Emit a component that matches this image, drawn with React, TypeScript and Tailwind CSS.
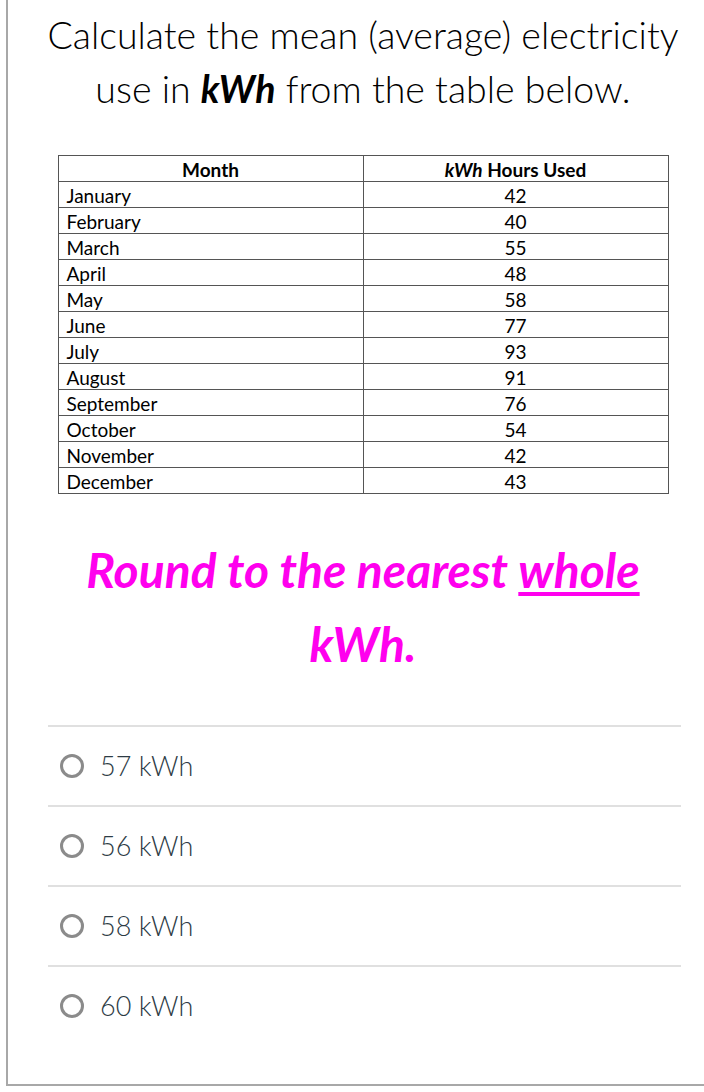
const rows: [string, number][] = [
  ["January", 42],
  ["February", 40],
  ["March", 55],
  ["April", 48],
  ["May", 58],
  ["June", 77],
  ["July", 93],
  ["August", 91],
  ["September", 76],
  ["October", 54],
  ["November", 42],
  ["December", 43],
];

const answers = ["57 kWh", "56 kWh", "58 kWh", "60 kWh"];

function UsageTable() {
  return (
    <table className="mx-auto w-[611px] border-collapse font-['Lato',sans-serif] text-[19px] leading-none text-black">
      <thead>
        <tr className="h-[26px]">
          <th className="w-[305px] border border-[#555] pt-[2px] font-bold">Month</th>
          <th className="border border-[#555] pt-[2px] font-bold">
            <i>kWh</i> Hours Used
          </th>
        </tr>
      </thead>
      <tbody>
        {rows.map(([month, kwh]) => (
          <tr key={month} className="h-[26px]">
            <td className="border border-[#555] px-2 pt-[2px] text-left">{month}</td>
            <td className="border border-[#555] pt-[2px] text-center">{kwh}</td>
          </tr>
        ))}
      </tbody>
    </table>
  );
}

function AnswerOption({ label }: { label: string }) {
  return (
    <div className="flex h-[80px] items-center border-t-2 border-[#e0e0e0] pl-3">
      <span className="h-6 w-6 shrink-0 rounded-full border-[3px] border-[#8b8b8b]" />
      <span className="ml-4 text-[27px] font-light text-[#2d3b45]">{label}</span>
    </div>
  );
}

export default function App() {
  return (
    <div className="h-[1092px] w-[704px] overflow-hidden bg-white font-['Lato',sans-serif]">
      <div className="ml-[6px] h-[1086px] w-[712px] border-b-2 border-l-2 border-[#a8a8a8] pt-2">
        <p className="px-8 text-center text-[37.5px] font-light leading-[54px] text-black">
          Calculate the mean (average) electricity use in{" "}
          <b className="font-bold italic">kWh</b> from the table below.
        </p>

        <div className="mt-[39px]">
          <UsageTable />
        </div>

        <p className="mx-auto mt-[39px] w-[580px] text-center text-[48px] font-bold italic leading-[74px] text-[#ff00ee]">
          Round to the nearest <u className="underline-offset-4">whole</u> kWh.
        </p>

        <div className="mt-[44px] ml-[40px] w-[633px]">
          {answers.map((a) => (
            <AnswerOption key={a} label={a} />
          ))}
        </div>
      </div>
    </div>
  );
}
